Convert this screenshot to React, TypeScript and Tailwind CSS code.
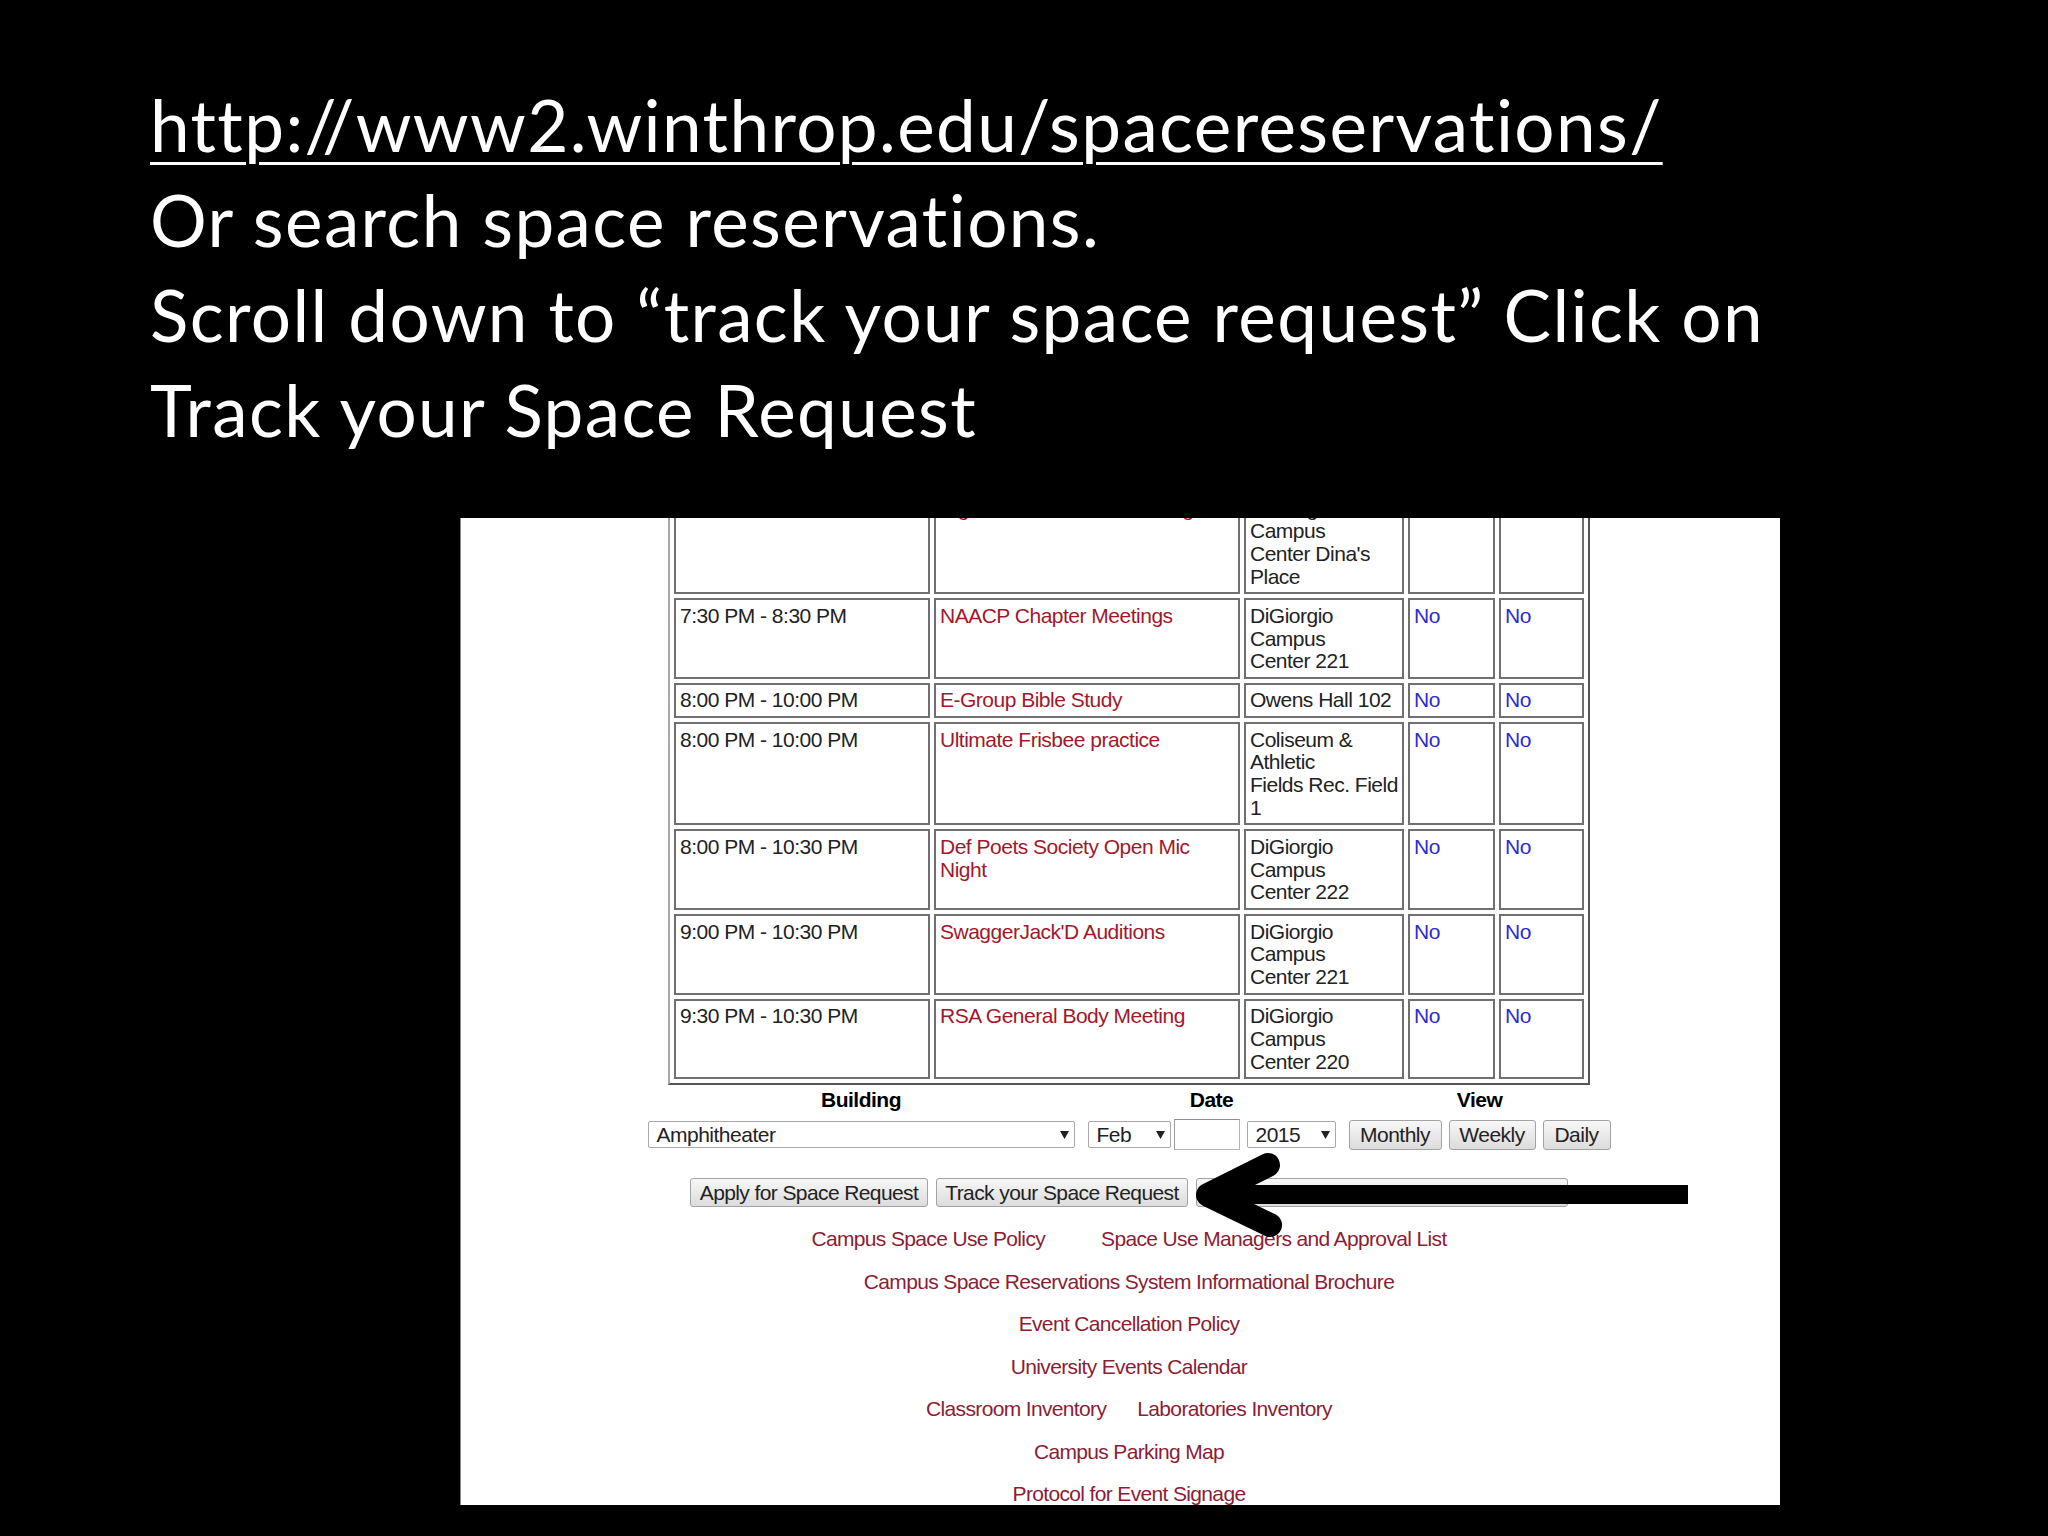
import React from 'react';

type Row = { time: string; event: string[]; place: string[] };

const rows: Row[] = [
  { time: '6:30 PM - 8:00 PM', event: ['Sigma Gamma Rho Meeting'], place: ['DiGiorgio', 'Campus', "Center Dina's", 'Place'] },
  { time: '7:30 PM - 8:30 PM', event: ['NAACP Chapter Meetings'], place: ['DiGiorgio', 'Campus', 'Center 221'] },
  { time: '8:00 PM - 10:00 PM', event: ['E-Group Bible Study'], place: ['Owens Hall 102'] },
  { time: '8:00 PM - 10:00 PM', event: ['Ultimate Frisbee practice'], place: ['Coliseum &', 'Athletic', 'Fields Rec. Field', '1'] },
  { time: '8:00 PM - 10:30 PM', event: ['Def Poets Society Open Mic', 'Night'], place: ['DiGiorgio', 'Campus', 'Center 222'] },
  { time: '9:00 PM - 10:30 PM', event: ["SwaggerJack'D Auditions"], place: ['DiGiorgio', 'Campus', 'Center 221'] },
  { time: '9:30 PM - 10:30 PM', event: ['RSA General Body Meeting'], place: ['DiGiorgio', 'Campus', 'Center 220'] },
];

const td = 'border-2 border-[#707070] pl-[4px] pr-[4px] pt-[4.5px] pb-[4px] align-top whitespace-nowrap';
const btn =
  'flex items-center justify-center rounded-[3px] border border-[#a3a3a3] bg-gradient-to-b from-[#f7f7f7] to-[#dcdcdc] text-[#222]';

function Lines({ items }: { items: string[] }) {
  return (
    <>
      {items.map((t, i) => (
        <div key={i}>{t}</div>
      ))}
    </>
  );
}

function Tri() {
  return (
    <svg width="9" height="8" viewBox="0 0 9 8" className="absolute top-[9px] right-[5px]">
      <polygon points="0,0 9,0 4.5,8" fill="#222" />
    </svg>
  );
}

export default function App() {
  return (
    <div className="h-[1536px] w-[2048px] overflow-hidden bg-black font-['Liberation_Sans',Arial,sans-serif]">
      <div className="whitespace-nowrap pt-[77px] pl-[150px] font-['Lato',sans-serif] text-[71px] leading-[95px] tracking-[1.4px] text-white [font-variant-ligatures:none]">
        <div>
          <span className="underline decoration-[3px] underline-offset-[10px]">http://www2.winthrop.edu/spacereservations/</span>
        </div>
        <div>Or search space reservations.</div>
        <div>Scroll down to “track your space request” Click on</div>
        <div>Track your Space Request</div>
      </div>

      <div className="relative mt-[61px] ml-[460px] h-[987px] w-[1320px] overflow-hidden border-l border-[#8a8a8a] bg-white pl-[17px]">
        <div className="flex flex-col items-center text-[21px] leading-[22.7px] tracking-[-0.5px] text-[#222]">
          {/* schedule table, scrolled so the first row is cut */}
          <table className="mt-[-33px] w-[922px] table-fixed border-separate border-spacing-[4px] border-2 border-t-[#a8a8a8] border-l-[#a8a8a8] border-r-[#555] border-b-[#555]">
            <colgroup>
              <col className="w-[256px]" />
              <col className="w-[306px]" />
              <col className="w-[160px]" />
              <col className="w-[87px]" />
              <col className="w-[85px]" />
            </colgroup>
            <tbody>
              {rows.map((r, i) => (
                <tr key={i}>
                  <td className={td}>{r.time}</td>
                  <td className={td + ' text-[#a3172b]'}>
                    <Lines items={r.event} />
                  </td>
                  <td className={td}>
                    <Lines items={r.place} />
                  </td>
                  <td className={td + ' text-[#2b2bd6]'}>No</td>
                  <td className={td + ' text-[#2b2bd6]'}>No</td>
                </tr>
              ))}
            </tbody>
          </table>

          {/* building / date / view */}
          <div className="mt-[3px] grid grid-cols-[427px_248px_262px] gap-x-[13px] leading-[23px]">
            <div className="text-center font-bold text-black">Building</div>
            <div className="text-center font-bold text-black">Date</div>
            <div className="text-center font-bold text-black">View</div>

            <div className="mt-[8px] flex h-[31px] items-center">
              <div className="relative h-[27px] w-[427px] rounded-[2px] border border-[#a9a9a9] bg-white pl-[8px] leading-[25px]">
                Amphitheater
                <Tri />
              </div>
            </div>
            <div className="mt-[8px] flex h-[31px] items-center">
              <div className="relative h-[27px] w-[83px] rounded-[2px] border border-[#a9a9a9] bg-white pl-[8px] leading-[25px]">
                Feb
                <Tri />
              </div>
              <div className="ml-[3px] h-[31px] w-[66px] border border-[#b5b5b5] border-t-[#8f8f8f] border-l-[#9a9a9a] bg-white" />
              <div className="relative ml-[7px] h-[27px] w-[89px] rounded-[2px] border border-[#a9a9a9] bg-white pl-[8px] leading-[25px]">
                2015
                <Tri />
              </div>
            </div>
            <div className="mt-[8px] flex h-[31px] items-center gap-[7px]">
              <div className={btn + ' h-[30px] w-[93px]'}>Monthly</div>
              <div className={btn + ' h-[30px] w-[87px]'}>Weekly</div>
              <div className={btn + ' h-[30px] w-[68px]'}>Daily</div>
            </div>
          </div>

          <div className="mt-[28px] flex gap-[8px] leading-[23px] tracking-[-0.6px]">
            <div className={btn + ' h-[29px] w-[238px]'}>Apply for Space Request</div>
            <div className={btn + ' h-[29px] w-[252px]'}>Track your Space Request</div>
            <div className={btn + ' h-[29px] w-[372px]'}>View Approved Space Pick Requests</div>
          </div>

          <div className="mt-[20px] flex flex-col items-center gap-[19.5px] leading-[23px] tracking-[-0.65px] text-[#8c1d33]">
            <div className="flex gap-[56px]">
              <span>Campus Space Use Policy</span>
              <span>Space Use Managers and Approval List</span>
            </div>
            <div>Campus Space Reservations System Informational Brochure</div>
            <div>Event Cancellation Policy</div>
            <div>University Events Calendar</div>
            <div className="flex gap-[31px]">
              <span>Classroom Inventory</span>
              <span>Laboratories Inventory</span>
            </div>
            <div>Campus Parking Map</div>
            <div>Protocol for Event Signage</div>
          </div>
        </div>

        {/* annotation arrow */}
        <svg className="pointer-events-none absolute top-0 left-0" width="1320" height="987" viewBox="0 0 1320 987">
          <polyline points="807,647 747,677 809,707" fill="none" stroke="#000" strokeWidth="24" strokeLinecap="round" strokeLinejoin="round" />
          <rect x="751" y="667" width="476" height="19" fill="#000" />
        </svg>
      </div>
    </div>
  );
}
